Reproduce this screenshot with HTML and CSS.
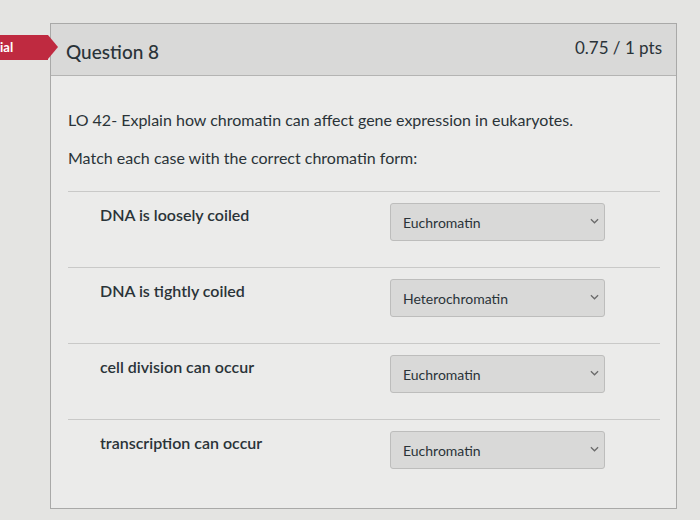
FILE: index.html
```html
<!DOCTYPE html>
<html lang="en">
<head>
<meta charset="utf-8">
<title>Question 8</title>
<link rel="stylesheet" href="styles.css">
</head>
<body>
<div class="page">
  <div class="tag">ial</div>
  <div class="card">
    <div class="card-header">
      <h2 class="q-title">Question 8</h2>
      <div class="q-pts">0.75 / 1 pts</div>
    </div>
    <div class="card-body">
      <p class="q-text q-first">LO 42- Explain how chromatin can affect gene expression in eukaryotes.</p>
      <p class="q-text q-second">Match each case with the correct chromatin form:</p>
      <div class="rows">
        <div class="row">
          <div class="label">DNA is loosely coiled</div>
          <div class="select"><span>Euchromatin</span><svg class="chev" viewBox="0 0 10 6" width="9" height="6"><path d="M1 1 L5 5 L9 1" fill="none" stroke="#6b6b6b" stroke-width="1.4"/></svg></div>
        </div>
        <div class="row">
          <div class="label">DNA is tightly coiled</div>
          <div class="select"><span>Heterochromatin</span><svg class="chev" viewBox="0 0 10 6" width="9" height="6"><path d="M1 1 L5 5 L9 1" fill="none" stroke="#6b6b6b" stroke-width="1.4"/></svg></div>
        </div>
        <div class="row">
          <div class="label">cell division can occur</div>
          <div class="select"><span>Euchromatin</span><svg class="chev" viewBox="0 0 10 6" width="9" height="6"><path d="M1 1 L5 5 L9 1" fill="none" stroke="#6b6b6b" stroke-width="1.4"/></svg></div>
        </div>
        <div class="row">
          <div class="label">transcription can occur</div>
          <div class="select"><span>Euchromatin</span><svg class="chev" viewBox="0 0 10 6" width="9" height="6"><path d="M1 1 L5 5 L9 1" fill="none" stroke="#6b6b6b" stroke-width="1.4"/></svg></div>
        </div>
      </div>
    </div>
  </div>
</div>
</body>
</html>
```
FILE: styles.css
```css
html, body {
  margin: 0;
  padding: 0;
}
body {
  background: #e4e4e2;
  font-family: Lato, "Liberation Sans", Arial, sans-serif;
  color: #2d3b45;
  width: 700px;
  height: 520px;
  overflow: hidden;
}
.page {
  position: relative;
  padding-top: 23px;
}
.tag {
  position: absolute;
  left: 0;
  top: 35px;
  width: 48px;
  height: 25px;
  background: #bf2a40;
  color: #fff;
  font-weight: 700;
  font-size: 13px;
  line-height: 24px;
  box-sizing: border-box;
}
.tag::after {
  content: "";
  position: absolute;
  left: 48px;
  top: 0;
  border-top: 12.5px solid transparent;
  border-bottom: 12.5px solid transparent;
  border-left: 10px solid #bf2a40;
}
.card {
  margin-left: 50px;
  width: 627px;
  border: 1px solid #a9a9a8;
  background: #ebebea;
  box-sizing: border-box;
}
.card-header {
  height: 52px;
  background: #d9d9d8;
  border-bottom: 1px solid #b4b4b3;
  display: flex;
  align-items: center;
  justify-content: space-between;
  padding: 0 14px 0 15px;
  box-sizing: border-box;
}
.q-title {
  margin: 4px 0 0 0;
  font-size: 19px;
  font-weight: 500;
  color: #2a3338;
}
.q-pts {
  font-size: 17px;
  color: #2a3338;
  margin-top: -5px;
}
.card-body {
  padding: 34px 16px 13px 17px;
}
.q-text {
  margin: 0;
  font-size: 16px;
  line-height: 20px;
  color: #2a3338;
}
.q-second {
  margin-top: 18px;
}
.rows {
  margin-top: 23px;
}
.row {
  border-top: 1px solid #c9c9c8;
  height: 76px;
  box-sizing: border-box;
  display: grid;
  grid-template-columns: 290px 215px;
  align-items: start;
  padding: 11px 0 0 32px;
}
.label {
  font-size: 16px;
  font-weight: 600;
  line-height: 20px;
  margin-top: 2px;
  color: #2a3338;
}
.select {
  height: 38px;
  background: #d9d9d8;
  border: 1px solid #bdbdbc;
  border-radius: 3px;
  box-sizing: border-box;
  display: flex;
  align-items: center;
  justify-content: space-between;
  padding: 0 5px 0 12px;
  font-size: 14px;
  color: #2a3338;
}
.chev {
  display: block;
  margin-top: -2px;
}
```
